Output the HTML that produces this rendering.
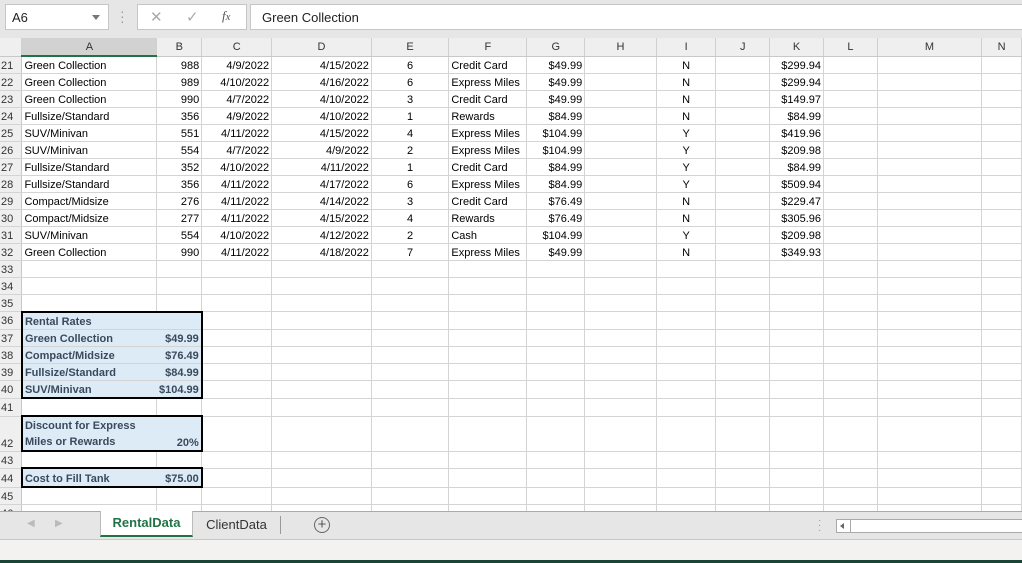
<!DOCTYPE html>
<html><head><meta charset="utf-8"><style>
*{margin:0;padding:0;box-sizing:border-box}
body{width:1022px;height:563px;overflow:hidden;background:#fff;font-family:"Liberation Sans",Arial,sans-serif;position:relative}
.fb{position:absolute;left:0;top:0;width:1022px;height:38px;background:#e6e6e6}
.nb{position:absolute;left:5px;top:4px;width:104px;height:26px;background:#fff;border:1px solid #c6c6c6;font-size:13px;padding:5px 6px;color:#222}
.nb:after{content:"";position:absolute;right:8px;top:10px;border:4px solid transparent;border-top:5px solid #777}
.dots{position:absolute;left:120px;top:9px;color:#999;font-size:14px;line-height:5px;width:3px}
.ib{position:absolute;left:137px;top:4px;width:110px;height:26px;background:#fff;border:1px solid #c6c6c6;color:#aaa;font-size:15px}
.fx{position:absolute;left:250px;top:4px;width:780px;height:26px;background:#fff;border:1px solid #c6c6c6;font-size:13px;padding:5px 11px;color:#222}
table{position:absolute;left:0;top:38px;border-collapse:collapse;table-layout:fixed;font-size:11px;color:#000}
td{border-right:1px solid #d4d4d4;border-bottom:1px solid #d4d4d4;height:17px;white-space:nowrap;overflow:hidden;padding:2px 2px 0;line-height:14px}
tr.h td{background:#efefef;text-align:center;height:18px;padding-top:0;line-height:16px;border-right:1px solid #d0d0d0;border-bottom:1px solid #c8c8c8;color:#333}
tr.h td.sel{background:#d2d2d2;border-bottom:2px solid #217346}
td.rh{background:#efefef;color:#333;padding:2px 1px 0;text-align:left;border-right:1px solid #c8c8c8;font-size:11px}
.r{text-align:right}.c{text-align:center}
.bx{background:#ddebf7;color:#3a4a5c;font-weight:bold}
.tabs{position:absolute;left:0;top:511px;width:1022px;height:28px;background:#e6e6e6;border-top:1px solid #aaa}
.tab1{position:absolute;left:100px;top:-1px;width:93px;height:26px;background:#fff;border:1px solid #bbb;border-top:none;border-bottom:2px solid #217346;color:#217346;font-weight:bold;font-size:13px;text-align:center;line-height:24px}
.tab2{position:absolute;left:193px;top:4px;width:88px;height:18px;border-right:1px solid #999;color:#333;font-size:13px;text-align:center;line-height:18px}
.plus{position:absolute;left:314px;top:5px;width:16px;height:16px;border:1px solid #666;border-radius:50%;text-align:center;line-height:13px;font-size:15px;color:#555}
.sb{position:absolute;left:0;top:539px;width:1022px;height:21px;background:#f3f2f1;border-top:1px solid #c8c8c8}
.gl{position:absolute;left:0;top:560px;width:1022px;height:3px;background:#1b4436}
.hs{position:absolute;left:836px;top:7px;width:190px;height:14px;background:#fff;border:1px solid #aaa}
.hs:before{content:"";position:absolute;left:0;top:0;width:13px;height:12px;border-right:1px solid #aaa}
.hs:after{content:"";position:absolute;left:3px;top:3px;border:3px solid transparent;border-right:4px solid #666;border-left:none}
</style></head><body>
<div class="fb">
<div class="nb">A6</div>
<div class="dots">·<br>·<br>·</div>
<div class="ib"><span style="position:absolute;left:12px;top:3px">✕</span><span style="position:absolute;left:48px;top:3px">✓</span><span style="position:absolute;left:84px;top:3px;color:#555;font-style:italic;font-family:'Liberation Serif',serif;font-size:13px">f<small>x</small></span></div>
<div class="fx">Green Collection</div>
</div>
<table>
<colgroup><col style="width:22px"><col style="width:135px"><col style="width:45px"><col style="width:70px"><col style="width:100px"><col style="width:78px"><col style="width:78px"><col style="width:58px"><col style="width:72px"><col style="width:60px"><col style="width:54px"><col style="width:54px"><col style="width:54px"><col style="width:105px"><col style="width:40px"></colgroup>
<tr class="h"><td></td><td class="sel">A</td><td>B</td><td>C</td><td>D</td><td>E</td><td>F</td><td>G</td><td>H</td><td>I</td><td>J</td><td>K</td><td>L</td><td>M</td><td>N</td></tr>
<tr><td class="rh">21</td><td>Green Collection</td><td class="r">988</td><td class="r">4/9/2022</td><td class="r">4/15/2022</td><td class="c">6</td><td>Credit Card</td><td class="r">$49.99</td><td></td><td class="c">N</td><td></td><td class="r">$299.94</td><td></td><td></td><td></td></tr>
<tr><td class="rh">22</td><td>Green Collection</td><td class="r">989</td><td class="r">4/10/2022</td><td class="r">4/16/2022</td><td class="c">6</td><td>Express Miles</td><td class="r">$49.99</td><td></td><td class="c">N</td><td></td><td class="r">$299.94</td><td></td><td></td><td></td></tr>
<tr><td class="rh">23</td><td>Green Collection</td><td class="r">990</td><td class="r">4/7/2022</td><td class="r">4/10/2022</td><td class="c">3</td><td>Credit Card</td><td class="r">$49.99</td><td></td><td class="c">N</td><td></td><td class="r">$149.97</td><td></td><td></td><td></td></tr>
<tr><td class="rh">24</td><td>Fullsize/Standard</td><td class="r">356</td><td class="r">4/9/2022</td><td class="r">4/10/2022</td><td class="c">1</td><td>Rewards</td><td class="r">$84.99</td><td></td><td class="c">N</td><td></td><td class="r">$84.99</td><td></td><td></td><td></td></tr>
<tr><td class="rh">25</td><td>SUV/Minivan</td><td class="r">551</td><td class="r">4/11/2022</td><td class="r">4/15/2022</td><td class="c">4</td><td>Express Miles</td><td class="r">$104.99</td><td></td><td class="c">Y</td><td></td><td class="r">$419.96</td><td></td><td></td><td></td></tr>
<tr><td class="rh">26</td><td>SUV/Minivan</td><td class="r">554</td><td class="r">4/7/2022</td><td class="r">4/9/2022</td><td class="c">2</td><td>Express Miles</td><td class="r">$104.99</td><td></td><td class="c">Y</td><td></td><td class="r">$209.98</td><td></td><td></td><td></td></tr>
<tr><td class="rh">27</td><td>Fullsize/Standard</td><td class="r">352</td><td class="r">4/10/2022</td><td class="r">4/11/2022</td><td class="c">1</td><td>Credit Card</td><td class="r">$84.99</td><td></td><td class="c">Y</td><td></td><td class="r">$84.99</td><td></td><td></td><td></td></tr>
<tr><td class="rh">28</td><td>Fullsize/Standard</td><td class="r">356</td><td class="r">4/11/2022</td><td class="r">4/17/2022</td><td class="c">6</td><td>Express Miles</td><td class="r">$84.99</td><td></td><td class="c">Y</td><td></td><td class="r">$509.94</td><td></td><td></td><td></td></tr>
<tr><td class="rh">29</td><td>Compact/Midsize</td><td class="r">276</td><td class="r">4/11/2022</td><td class="r">4/14/2022</td><td class="c">3</td><td>Credit Card</td><td class="r">$76.49</td><td></td><td class="c">N</td><td></td><td class="r">$229.47</td><td></td><td></td><td></td></tr>
<tr><td class="rh">30</td><td>Compact/Midsize</td><td class="r">277</td><td class="r">4/11/2022</td><td class="r">4/15/2022</td><td class="c">4</td><td>Rewards</td><td class="r">$76.49</td><td></td><td class="c">N</td><td></td><td class="r">$305.96</td><td></td><td></td><td></td></tr>
<tr><td class="rh">31</td><td>SUV/Minivan</td><td class="r">554</td><td class="r">4/10/2022</td><td class="r">4/12/2022</td><td class="c">2</td><td>Cash</td><td class="r">$104.99</td><td></td><td class="c">Y</td><td></td><td class="r">$209.98</td><td></td><td></td><td></td></tr>
<tr><td class="rh">32</td><td>Green Collection</td><td class="r">990</td><td class="r">4/11/2022</td><td class="r">4/18/2022</td><td class="c">7</td><td>Express Miles</td><td class="r">$49.99</td><td></td><td class="c">N</td><td></td><td class="r">$349.93</td><td></td><td></td><td></td></tr>
<tr><td class="rh">33</td><td></td><td></td><td></td><td></td><td></td><td></td><td></td><td></td><td></td><td></td><td></td><td></td><td></td><td></td></tr>
<tr><td class="rh">34</td><td></td><td></td><td></td><td></td><td></td><td></td><td></td><td></td><td></td><td></td><td></td><td></td><td></td><td></td></tr>
<tr><td class="rh">35</td><td style="border-bottom:2px solid #000"></td><td style="border-bottom:2px solid #000"></td><td></td><td></td><td></td><td></td><td></td><td></td><td></td><td></td><td></td><td></td><td></td><td></td></tr>
<tr><td class="rh">36</td><td class="bx" style="border-left:2px solid #000;border-right:none">Rental Rates</td><td class="bx" style="border-right:2px solid #000"></td><td></td><td></td><td></td><td></td><td></td><td></td><td></td><td></td><td></td><td></td><td></td><td></td></tr>
<tr><td class="rh">37</td><td class="bx" style="border-left:2px solid #000;border-right:none">Green Collection</td><td class="bx r" style="border-right:2px solid #000">$49.99</td><td></td><td></td><td></td><td></td><td></td><td></td><td></td><td></td><td></td><td></td><td></td><td></td></tr>
<tr><td class="rh">38</td><td class="bx" style="border-left:2px solid #000;border-right:none">Compact/Midsize</td><td class="bx r" style="border-right:2px solid #000">$76.49</td><td></td><td></td><td></td><td></td><td></td><td></td><td></td><td></td><td></td><td></td><td></td><td></td></tr>
<tr><td class="rh">39</td><td class="bx" style="border-left:2px solid #000;border-right:none">Fullsize/Standard</td><td class="bx r" style="border-right:2px solid #000">$84.99</td><td></td><td></td><td></td><td></td><td></td><td></td><td></td><td></td><td></td><td></td><td></td><td></td></tr>
<tr><td class="rh" style="height:18px">40</td><td class="bx" style="border-left:2px solid #000;border-right:none;border-bottom:2px solid #000">SUV/Minivan</td><td class="bx r" style="border-right:2px solid #000;border-bottom:2px solid #000">$104.99</td><td></td><td></td><td></td><td></td><td></td><td></td><td></td><td></td><td></td><td></td><td></td><td></td></tr>
<tr><td class="rh" style="height:18px">41</td><td style="border-bottom:2px solid #000"></td><td style="border-bottom:2px solid #000"></td><td></td><td></td><td></td><td></td><td></td><td></td><td></td><td></td><td></td><td></td><td></td><td></td></tr>
<tr><td class="rh" style="height:35px;vertical-align:bottom">42</td><td class="bx" style="border-left:2px solid #000;border-right:none;border-bottom:2px solid #000;line-height:16px;padding-top:1px">Discount for Express<br>Miles or Rewards</td><td class="bx r" style="border-right:2px solid #000;border-bottom:2px solid #000;vertical-align:bottom">20%</td><td></td><td></td><td></td><td></td><td></td><td></td><td></td><td></td><td></td><td></td><td></td><td></td></tr>
<tr><td class="rh">43</td><td style="border-bottom:2px solid #000"></td><td style="border-bottom:2px solid #000"></td><td></td><td></td><td></td><td></td><td></td><td></td><td></td><td></td><td></td><td></td><td></td><td></td></tr>
<tr><td class="rh" style="height:19px">44</td><td class="bx" style="border-left:2px solid #000;border-right:none;border-bottom:2px solid #000">Cost to Fill Tank</td><td class="bx r" style="border-right:2px solid #000;border-bottom:2px solid #000">$75.00</td><td></td><td></td><td></td><td></td><td></td><td></td><td></td><td></td><td></td><td></td><td></td><td></td></tr>
<tr><td class="rh">45</td><td></td><td></td><td></td><td></td><td></td><td></td><td></td><td></td><td></td><td></td><td></td><td></td><td></td><td></td></tr>
<tr><td class="rh">46</td><td></td><td></td><td></td><td></td><td></td><td></td><td></td><td></td><td></td><td></td><td></td><td></td><td></td><td></td></tr>
</table>
<div class="tabs">
<span style="position:absolute;left:27px;top:6px;color:#bbb;font-size:10px">◀</span><span style="position:absolute;left:55px;top:6px;color:#bbb;font-size:10px">▶</span>
<div class="tab1">RentalData</div>
<div class="tab2">ClientData</div>
<div class="plus">+</div>
<div style="position:absolute;left:818px;top:6px;color:#999;font-size:10px;line-height:5px">·<br>·<br>·</div>
<div class="hs"></div>
</div>
<div class="sb"></div>
<div class="gl"></div>
</body></html>
